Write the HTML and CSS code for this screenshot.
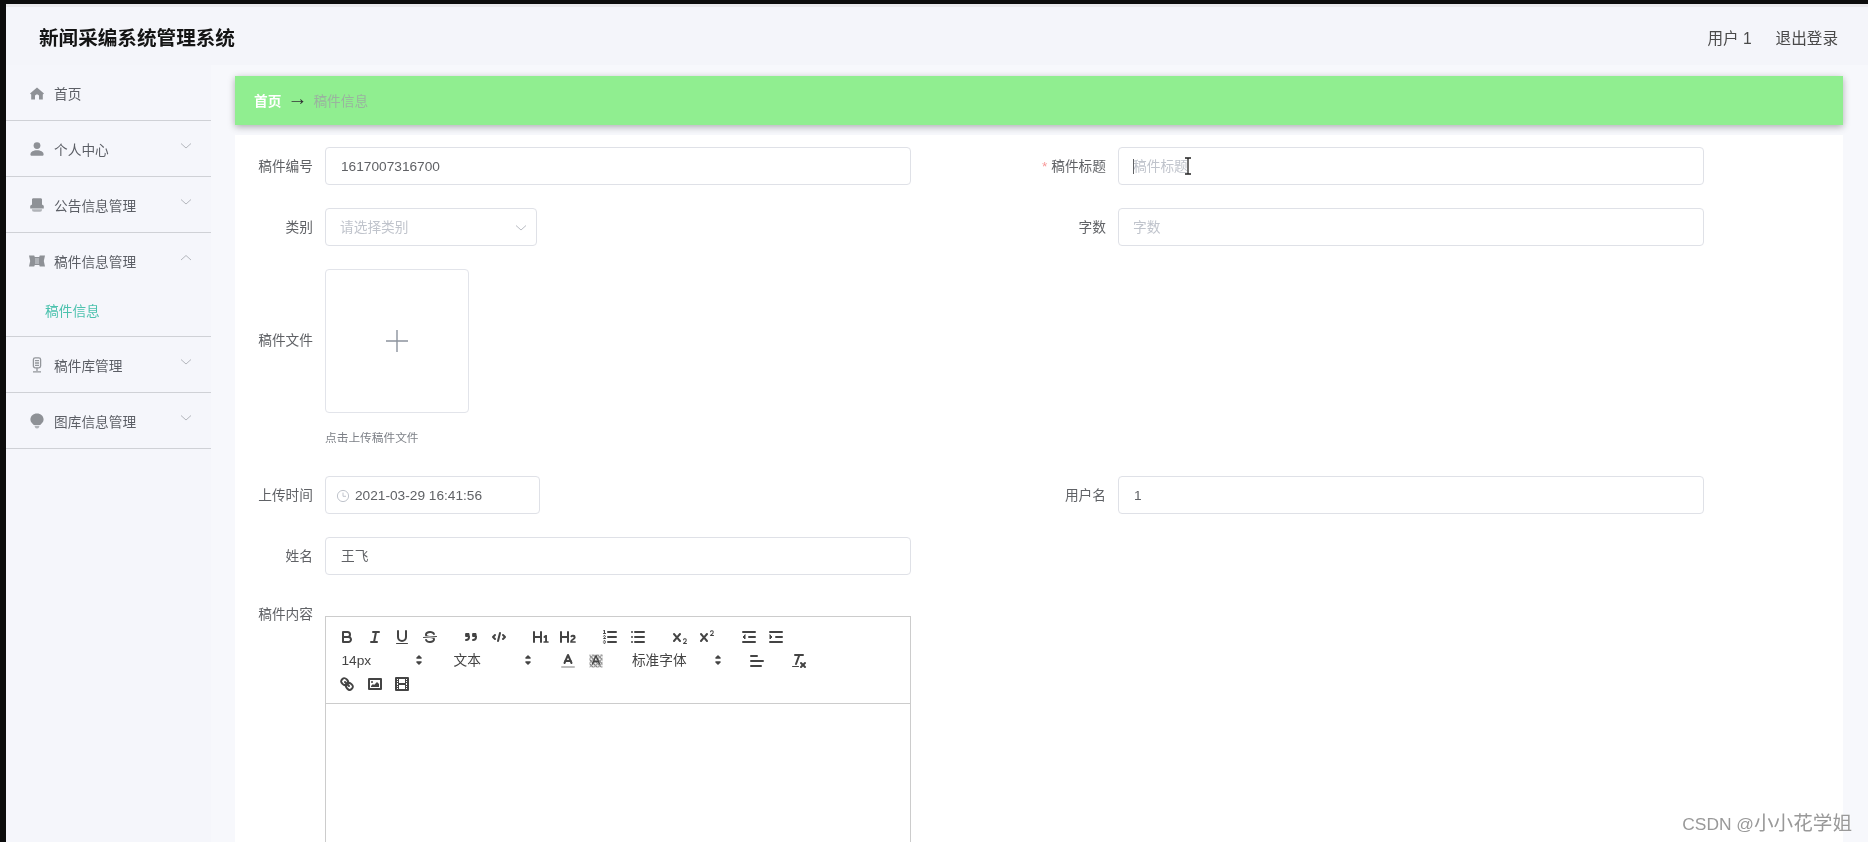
FILE: index.html
```html
<!DOCTYPE html>
<html lang="zh-CN">
<head>
<meta charset="utf-8">
<title>新闻采编系统管理系统</title>
<link rel="stylesheet" href="styles.css">
</head>
<body>
<svg class="defs" aria-hidden="true">
  <defs>
    <pattern id="hatch" width="3" height="3" patternUnits="userSpaceOnUse" patternTransform="rotate(45)"><rect width="3" height="1.2" fill="#777"/><rect width="1.2" height="3" fill="#999"/></pattern>
    <symbol id="chev-down" viewBox="0 0 12 12"><polyline points="1,3.5 6,8 11,3.5"/></symbol>
    <symbol id="chev-up" viewBox="0 0 12 12"><polyline points="1,8 6,3.5 11,8"/></symbol>
    <symbol id="updown" viewBox="0 0 18 18"><polygon class="qa" points="7 11 9 13 11 11 7 11"/><polygon class="qa" points="7 7 9 5 11 7 7 7"/></symbol>
  </defs>
</svg>
<div class="frame">
  <header class="topbar">
    <h1 class="brand">新闻采编系统管理系统</h1>
    <div class="user"><span>用户 1</span><span>退出登录</span></div>
  </header>
  <div class="body-row">
    <nav class="sidebar">
      <div class="nav-item">
        <div class="nav-row">
          <svg class="nav-icon" viewBox="0 0 16 16"><path d="M8 2.4 15 8.6 13.8 9.6V14.6H10V11C10 10.2 9 9.6 8 9.6S6 10.2 6 11V14.6H2.2V9.6L1 8.6Z"/></svg>
          <span>首页</span>
        </div>
      </div>
      <div class="nav-item">
        <div class="nav-row">
          <svg class="nav-icon" viewBox="0 0 16 16"><circle cx="8" cy="4.6" r="3.4"/><path d="M1.4 13.2C1.4 10.8 4.4 9.2 8 9.2S14.6 10.8 14.6 13.2C14.6 14.4 14 14.8 13 14.8H3C2 14.8 1.4 14.4 1.4 13.2Z"/></svg>
          <span>个人中心</span>
          <svg class="chev"><use href="#chev-down"/></svg>
        </div>
      </div>
      <div class="nav-item">
        <div class="nav-row">
          <svg class="nav-icon" viewBox="0 0 16 16"><path d="M3 2.6C3 1.8 3.6 1.2 4.4 1.2H11.6C12.4 1.2 13 1.8 13 2.6V7.6L14.8 8.8V11.4H1.2V8.8L3 7.6Z"/><path class="soft" d="M2.8 12.2H13.2L12.8 13.6C12.6 14.4 12 14.8 11.2 14.8H4.8C4 14.8 3.4 14.4 3.2 13.6Z"/></svg>
          <span>公告信息管理</span>
          <svg class="chev"><use href="#chev-down"/></svg>
        </div>
      </div>
      <div class="nav-item">
        <div class="nav-row">
          <svg class="nav-icon" viewBox="0 0 16 16"><path d="M0 2.6H5.2L5.8 4H10.2L10.8 2.6H16L14.8 8 16 13.4H10.8L10.2 12H5.8L5.2 13.4H0L1.2 8Z"/><path class="soft" d="M6 5H10V11H6Z"/></svg>
          <span>稿件信息管理</span>
          <svg class="chev"><use href="#chev-up"/></svg>
        </div>
        <div class="nav-sub">稿件信息</div>
      </div>
      <div class="nav-item">
        <div class="nav-row">
          <svg class="nav-icon" viewBox="0 0 16 16"><path class="mic" d="M4.4 2.6C4.4 1.5 5.2.8 6.2.8H9.8C10.8.8 11.6 1.5 11.6 2.6V9C11.6 10.1 10.8 10.8 9.8 10.8H6.2C5.2 10.8 4.4 10.1 4.4 9Z"/><path class="mic" d="M8 10.8V14M4 14.8H12M6 3.6H10M6 6H10M6 8.4H10"/></svg>
          <span>稿件库管理</span>
          <svg class="chev"><use href="#chev-down"/></svg>
        </div>
      </div>
      <div class="nav-item">
        <div class="nav-row">
          <svg class="nav-icon" viewBox="0 0 16 16"><path d="M8 .6C11.8.6 14.6 3.2 14.6 6.6 14.6 9.2 12.8 10.4 11.2 12H4.8C3.2 10.4 1.4 9.2 1.4 6.6 1.4 3.2 4.2.6 8 .6Z"/><path class="soft" d="M5.4 12.8H10.6L9.6 15C9.2 15.6 6.8 15.6 6.4 15Z"/></svg>
          <span>图库信息管理</span>
          <svg class="chev"><use href="#chev-down"/></svg>
        </div>
      </div>
    </nav>
    <main class="content">
      <div class="crumbs"><span class="crumb-home">首页</span><span class="crumb-sep">→</span><span class="crumb-cur">稿件信息</span></div>
      <form class="card">
        <div class="field">
          <label class="label">稿件编号</label>
          <div class="input wide">1617007316700</div>
        </div>
        <div class="field">
          <label class="label"><i class="req">*</i> 稿件标题</label>
          <div class="input wide ph focus">稿件标题<span class="caret"></span>
            <svg class="ibeam" viewBox="0 0 10 18"><path d="M2 1H8M5 1V17M2 17H8"/></svg>
          </div>
        </div>
        <div class="field">
          <label class="label">类别</label>
          <div class="input select ph">请选择类别<svg class="chev sel-chev"><use href="#chev-down"/></svg></div>
        </div>
        <div class="field">
          <label class="label">字数</label>
          <div class="input wide ph">字数</div>
        </div>
        <div class="field col1 upload-field">
          <label class="label upload-label">稿件文件</label>
          <div class="upload-col">
            <div class="upload"><svg class="plus" viewBox="0 0 22 22"><path d="M0 11H22M11 0V22"/></svg></div>
            <div class="hint">点击上传稿件文件</div>
          </div>
        </div>
        <div class="field col1">
          <label class="label">上传时间</label>
          <div class="input date"><svg class="clock" viewBox="0 0 14 14"><circle cx="7" cy="7" r="5.6"/><path d="M7 3.6V7.3H10"/></svg>2021-03-29 16:41:56</div>
        </div>
        <div class="field">
          <label class="label">用户名</label>
          <div class="input wide">1</div>
        </div>
        <div class="field col1">
          <label class="label">姓名</label>
          <div class="input wide">王飞</div>
        </div>
        <div class="field col1">
          <label class="label editor-label">稿件内容</label>
          <div class="editor">
            <div class="toolbar">
              <div class="tb-row">
                <div class="tb-group">
                  <button type="button" class="tb"><svg viewBox="0 0 18 18"><path class="qs" d="M5,4H9.5A2.5,2.5,0,0,1,12,6.5v0A2.5,2.5,0,0,1,9.5,9H5A0,0,0,0,1,5,9V4A0,0,0,0,1,5,4Z"/><path class="qs" d="M5,9h5.5A2.5,2.5,0,0,1,13,11.5v0A2.5,2.5,0,0,1,10.5,14H5a0,0,0,0,1,0,0V9A0,0,0,0,1,5,9Z"/></svg></button>
                  <button type="button" class="tb"><svg viewBox="0 0 18 18"><line class="qs" x1="7" x2="13" y1="4" y2="4"/><line class="qs" x1="5" x2="11" y1="14" y2="14"/><line class="qs" x1="8" x2="10" y1="14" y2="4"/></svg></button>
                  <button type="button" class="tb"><svg viewBox="0 0 18 18"><path class="qs" d="M5,3V9a4.012,4.012,0,0,0,4,4H9a4.012,4.012,0,0,0,4-4V3"/><rect class="qf" height="1" rx=".5" ry=".5" width="12" x="3" y="15"/></svg></button>
                  <button type="button" class="tb"><svg viewBox="0 0 18 18"><line class="qs qt" x1="15.5" x2="2.5" y1="8.5" y2="9.5"/><path class="qf" d="M9.007,8C6.542,7.791,6,7.519,6,6.5,6,5.792,7.283,5,9,5c1.571,0,2.765.679,2.969,1.309a1,1,0,0,0,1.9-.617C13.356,4.106,11.354,3,9,3,6.2,3,4,4.538,4,6.5a3.2,3.2,0,0,0,.5,1.843Z"/><path class="qf" d="M8.984,10C11.457,10.208,12,10.479,12,11.5c0,.708-1.283,1.5-3,1.5-1.571,0-2.765-.679-2.969-1.309a1,1,0,1,0-1.9.617C4.644,13.894,6.646,15,9,15c2.8,0,5-1.538,5-3.5a3.2,3.2,0,0,0-.5-1.843Z"/></svg></button>
                </div>
                <div class="tb-group">
                  <button type="button" class="tb"><svg viewBox="0 0 18 18"><rect class="qs qf" height="3" width="3" x="4" y="5.5"/><rect class="qs qf" height="3" width="3" x="11" y="5.5"/><path class="qs" d="M7,8.5V9A3,3,0,0,1,4,12"/><path class="qs" d="M14,8.5V9a3,3,0,0,1-3,3"/></svg></button>
                  <button type="button" class="tb"><svg viewBox="0 0 18 18"><polyline class="qs" points="5 7 3 9 5 11"/><polyline class="qs" points="13 7 15 9 13 11"/><line class="qs" x1="10" x2="8" y1="5" y2="13"/></svg></button>
                </div>
                <div class="tb-group">
                  <button type="button" class="tb"><svg viewBox="0 0 18 18"><path class="qf" d="M10,4V14a1,1,0,0,1-2,0V10H3v4a1,1,0,0,1-2,0V4A1,1,0,0,1,3,4V8H8V4a1,1,0,0,1,2,0Zm6.06787,9.209H14.98975V7.59277a.54085.54085,0,0,0-.605-.60547h-.62744a1.01119,1.01119,0,0,0-.748.29688L11.645,8.56641a.5435.5435,0,0,0-.022.8584l.28613.30762a.53861.53861,0,0,0,.84717.0332l.09912-.08789a1.2137,1.2137,0,0,0,.2417-.35254h.02246s-.01123.30859-.01123.60547V13.209H12.041a.54085.54085,0,0,0-.605.60547v.43945a.54085.54085,0,0,0,.605.60547h4.02686a.54085.54085,0,0,0,.605-.60547v-.43945A.54085.54085,0,0,0,16.06787,13.209Z"/></svg></button>
                  <button type="button" class="tb"><svg viewBox="0 0 18 18"><path class="qf" d="M16.73975,13.81445v.43945a.54085.54085,0,0,1-.605.60547H11.855a.58392.58392,0,0,1-.64893-.60547V14.0127c0-2.90527,3.39941-3.42187,3.39941-4.55469a.77675.77675,0,0,0-.84717-.78125,1.17684,1.17684,0,0,0-.83594.38477c-.2749.26367-.561.374-.85791.13184l-.4292-.34082c-.30811-.24219-.38525-.51758-.1543-.81445a2.97155,2.97155,0,0,1,2.45361-1.17676,2.45393,2.45393,0,0,1,2.68408,2.40918c0,2.45312-3.1792,2.92676-3.27832,3.93848h2.79443A.54085.54085,0,0,1,16.73975,13.81445ZM9,3A.99974.99974,0,0,0,8,4V8H3V4A1,1,0,0,0,1,4V14a1,1,0,0,0,2,0V10H8v4a1,1,0,0,0,2,0V4A.99974.99974,0,0,0,9,3Z"/></svg></button>
                </div>
                <div class="tb-group">
                  <button type="button" class="tb"><svg viewBox="0 0 18 18"><line class="qs" x1="7" x2="15" y1="4" y2="4"/><line class="qs" x1="7" x2="15" y1="9" y2="9"/><line class="qs" x1="7" x2="15" y1="14" y2="14"/><line class="qs qt" x1="2.5" x2="4.5" y1="5.5" y2="5.5"/><path class="qf" d="M3.5,6A0.5,0.5,0,0,1,3,5.5V3.085l-0.276.138A0.5,0.5,0,0,1,2.053,3c-0.124-.247-0.023-0.324.224-0.447l1-.5A0.5,0.5,0,0,1,4,2.5v3A0.5,0.5,0,0,1,3.5,6Z"/><path class="qs qt" d="M4.5,10.5h-2c0-.234,1.85-1.076,1.85-2.234A0.959,0.959,0,0,0,2.5,8.156"/><path class="qs qt" d="M2.5,14.846a0.959,0.959,0,0,0,1.85-.109A0.7,0.7,0,0,0,3.75,14a0.688,0.688,0,0,0,.6-0.736,0.959,0.959,0,0,0-1.85-.109"/></svg></button>
                  <button type="button" class="tb"><svg viewBox="0 0 18 18"><line class="qs" x1="6" x2="15" y1="4" y2="4"/><line class="qs" x1="6" x2="15" y1="9" y2="9"/><line class="qs" x1="6" x2="15" y1="14" y2="14"/><line class="qs" x1="3" x2="3" y1="4" y2="4"/><line class="qs" x1="3" x2="3" y1="9" y2="9"/><line class="qs" x1="3" x2="3" y1="14" y2="14"/></svg></button>
                </div>
                <div class="tb-group">
                  <button type="button" class="tb"><svg viewBox="0 0 18 18"><path class="qf" d="M15.5,15H13.861a3.858,3.858,0,0,0,1.914-2.975,1.8,1.8,0,0,0-1.6-1.751A1.921,1.921,0,0,0,12.021,11.7a0.50013,0.50013,0,1,0,.957.291h0a0.914,0.914,0,0,1,1.053-.725,0.81,0.81,0,0,1,.744.762c0,1.076-1.16971,1.86982-1.93971,2.43082A1.45639,1.45639,0,0,0,12,15.5a0.5,0.5,0,0,0,.5.5h3A0.5,0.5,0,0,0,15.5,15Z"/><path class="qf" d="M9.65,5.241a1,1,0,0,0-1.409.108L6,7.964,3.759,5.349A1,1,0,0,0,2.192,6.59178Q2.21541,6.6213,2.241,6.649L4.684,9.5,2.241,12.35A1,1,0,0,0,3.71,13.70722q0.02557-.02768.049-0.05722L6,11.036,8.241,13.65a1,1,0,1,0,1.567-1.24277Q9.78459,12.3777,9.759,12.35L7.316,9.5,9.759,6.651A1,1,0,0,0,9.65,5.241Z"/></svg></button>
                  <button type="button" class="tb"><svg viewBox="0 0 18 18"><path class="qf" d="M15.5,7H13.861a4.015,4.015,0,0,0,1.914-2.975,1.8,1.8,0,0,0-1.6-1.751A1.922,1.922,0,0,0,12.021,3.7a0.5,0.5,0,1,0,.957.291,0.917,0.917,0,0,1,1.053-.725,0.81,0.81,0,0,1,.744.762c0,1.077-1.164,1.925-1.934,2.486A1.423,1.423,0,0,0,12,7.5a0.5,0.5,0,0,0,.5.5h3A0.5,0.5,0,0,0,15.5,7Z"/><path class="qf" d="M9.65,5.241a1,1,0,0,0-1.409.108L6,7.964,3.759,5.349A1,1,0,0,0,2.192,6.59178Q2.21541,6.6213,2.241,6.649L4.684,9.5,2.241,12.35A1,1,0,0,0,3.71,13.70722q0.02557-.02768.049-0.05722L6,11.036,8.241,13.65a1,1,0,1,0,1.567-1.24277Q9.78459,12.3777,9.759,12.35L7.316,9.5,9.759,6.651A1,1,0,0,0,9.65,5.241Z"/></svg></button>
                </div>
                <div class="tb-group">
                  <button type="button" class="tb"><svg viewBox="0 0 18 18"><line class="qs" x1="3" x2="15" y1="14" y2="14"/><line class="qs" x1="3" x2="15" y1="4" y2="4"/><line class="qs" x1="9" x2="15" y1="9" y2="9"/><polyline class="qs qf" points="5 7 5 11 3 9 5 7"/></svg></button>
                  <button type="button" class="tb"><svg viewBox="0 0 18 18"><line class="qs" x1="3" x2="15" y1="14" y2="14"/><line class="qs" x1="3" x2="15" y1="4" y2="4"/><line class="qs" x1="9" x2="15" y1="9" y2="9"/><polyline class="qs qf" points="3 7 3 11 5 9 3 7"/></svg></button>
                </div>
              </div>
              <div class="tb-row">
                <div class="picker size">14px<svg class="updown"><use href="#updown"/></svg></div>
                <div class="picker head">文本<svg class="updown"><use href="#updown"/></svg></div>
                <div class="tb-group">
                  <button type="button" class="tb"><svg viewBox="0 0 18 18"><line class="qs under" x1="3" x2="15" y1="15" y2="15"/><polyline class="qs" points="5.5 11 9 3 12.5 11"/><line class="qs" x1="11.63" x2="6.38" y1="9" y2="9"/></svg></button>
                  <button type="button" class="tb"><svg viewBox="0 0 18 18"><rect class="hatch" x="2.5" y="2.5" width="13" height="13"/><polyline class="qs thin" points="5.5 12 9 3.5 12.5 12"/><line class="qs thin" x1="11.5" x2="6.5" y1="9.5" y2="9.5"/></svg></button>
                </div>
                <div class="picker font">标准字体<svg class="updown"><use href="#updown"/></svg></div>
                <div class="tb-group">
                  <button type="button" class="tb"><svg viewBox="0 0 18 18"><line class="qs" x1="3" x2="15" y1="9" y2="9"/><line class="qs" x1="3" x2="13" y1="14" y2="14"/><line class="qs" x1="3" x2="9" y1="4" y2="4"/></svg></button>
                </div>
                <div class="tb-group">
                  <button type="button" class="tb"><svg viewBox="0 0 18 18"><line class="qs" x1="5" x2="13" y1="3" y2="3"/><line class="qs" x1="6" x2="9.35" y1="12" y2="3"/><line class="qs" x1="11" x2="15" y1="11" y2="15"/><line class="qs" x1="15" x2="11" y1="11" y2="15"/><rect class="qf" height="1" rx=".5" ry=".5" width="7" x="2" y="14"/></svg></button>
                </div>
              </div>
              <div class="tb-row">
                <div class="tb-group">
                  <button type="button" class="tb"><svg viewBox="0 0 18 18"><line class="qs" x1="7" x2="11" y1="7" y2="11"/><path class="qs" d="M8.9,4.577a3.476,3.476,0,0,1,.36,4.679A3.476,3.476,0,0,1,4.577,8.9C3.185,7.5,2.035,6.4,4.217,4.217S7.5,3.185,8.9,4.577Z"/><path class="qs" d="M13.423,9.1a3.476,3.476,0,0,0-4.679-.36,3.476,3.476,0,0,0,.36,4.679c1.392,1.392,2.5,2.542,4.679.36S14.815,10.5,13.423,9.1Z"/></svg></button>
                  <button type="button" class="tb"><svg viewBox="0 0 18 18"><rect class="qs" height="10" width="12" x="3" y="4"/><circle class="qf" cx="6" cy="7" r="1"/><polyline class="qf" points="5 12 5 11 7 9 8 10 11 7 13 9 13 12 5 12"/></svg></button>
                  <button type="button" class="tb"><svg viewBox="0 0 18 18"><rect class="qs" height="12" width="12" x="3" y="3"/><rect class="qf" height="12" width="1" x="5" y="3"/><rect class="qf" height="12" width="1" x="12" y="3"/><rect class="qf" height="2" width="8" x="5" y="8"/><rect class="qf" height="1" width="3" x="3" y="5"/><rect class="qf" height="1" width="3" x="3" y="7"/><rect class="qf" height="1" width="3" x="3" y="10"/><rect class="qf" height="1" width="3" x="3" y="12"/><rect class="qf" height="1" width="3" x="12" y="5"/><rect class="qf" height="1" width="3" x="12" y="7"/><rect class="qf" height="1" width="3" x="12" y="10"/><rect class="qf" height="1" width="3" x="12" y="12"/></svg></button>
                </div>
              </div>
            </div>
            <div class="editor-body"></div>
          </div>
        </div>
      </form>
    </main>
  </div>
  <div class="watermark"><span class="wm-latin">CSDN @</span><span class="wm-cjk">小小花学姐</span></div>
</div>
</body>
</html>
```

FILE: styles.css
```css
* { box-sizing: border-box; }
html, body { margin: 0; height: 842px; overflow: hidden; background: #0c0c0c; }
body { font-family: "Liberation Sans", "Noto Sans CJK SC", sans-serif; font-size: 13.7px; color: #606266; }
.defs { position: absolute; width: 0; height: 0; }

.frame {
  position: relative;
  height: 838px;
  margin: 4px 0 0 6px;
  border-top: 3px solid #e9e9ec;
  background: #f5f6fb;
  overflow: hidden;
  filter: blur(0.45px);
}

.topbar { height: 58px; display: flex; align-items: center; justify-content: space-between; padding: 1px 30px 0 33px; background: #f4f5fa; }
.brand { margin: 0; font-size: 19.6px; font-weight: 700; color: #141414; }
.user { display: flex; gap: 24px; font-size: 15.6px; color: #4a4a4a; }

.body-row { display: flex; }
.sidebar { width: 205px; flex: none; background: #f5f6fb; }
.nav-item { border-bottom: 1px solid #cfd1d6; }
.nav-row { height: 55px; display: flex; align-items: center; padding: 0 19px 0 23px; color: #5c5f66; }
.nav-row > span { flex: 1; }
.nav-icon { width: 16px; height: 16px; margin-right: 9px; fill: #8e9196; flex: none; }
.nav-icon .soft { fill: #b0b3b8; }
.nav-icon .mic { fill: none; stroke: #93969b; stroke-width: 1.3; }
.chev { width: 12px; height: 12px; fill: none; stroke: #b4b7bd; stroke-width: 1; margin-bottom: 5px; flex: none; }
.nav-sub { height: 48px; padding: 0 0 0 39px; line-height: 48px; color: #4cc2ae; }

.content { flex: 1; min-width: 0; padding: 11px 25px 0 24px; background: #f7f8fc; }
.crumbs { height: 49px; display: flex; align-items: center; padding: 0 0 2px 19px; background: #90ee90; box-shadow: 0 2px 7px rgba(0,0,0,.3); }
.crumb-home { color: #fff; font-weight: 700; }
.crumb-sep { margin: 0 10px 3px 6px; width: 16px; font-size: 20px; font-weight: 700; line-height: 20px; color: #303133; text-align: center; }
.crumb-cur { color: #9ab39f; }

.card { display: grid; grid-template-columns: 793px 1fr; row-gap: 23px; align-items: start; margin-top: 10px; padding-top: 12px; background: #fff; min-height: 900px; }
.field { display: flex; align-items: flex-start; }
.col1 { grid-column: 1; }
.label { width: 78px; height: 38px; margin-right: 12px; flex: none; line-height: 39px; text-align: right; color: #606266; }
.req { font-style: normal; color: #f56c6c; opacity: .7; }

.input { position: relative; height: 38px; padding: 0 15px; line-height: 37.5px; border: 1px solid #dfe1e7; border-radius: 4px; background: #fff; color: #606266; }
.wide { width: 586px; }
.ph { padding-left: 14px; color: #c0c4cc; }
.select { width: 212px; }
.sel-chev { position: absolute; right: 9px; top: 13px; margin: 0; stroke: #b9bcc3; }
.date { width: 215px; padding-left: 29px; }
.clock { position: absolute; left: 10px; top: 12px; width: 14px; height: 14px; fill: none; stroke: #c0c4cc; stroke-width: 1; }
.caret { position: absolute; left: 14px; top: 11px; width: 1px; height: 15px; background: #606266; }
.ibeam { position: absolute; left: 64px; top: 9px; width: 10px; height: 18px; fill: none; stroke: #222; stroke-width: 1.3; }

.upload-label { height: 144px; line-height: 144px; }
.upload-col { display: flex; flex-direction: column; }
.upload { width: 144px; height: 144px; display: flex; align-items: center; justify-content: center; border: 1px solid #e2e4ea; border-radius: 4px; background: #fff; }
.plus { width: 22px; height: 22px; fill: none; stroke: #8c939d; stroke-width: 1.4; }
.hint { height: 40px; padding-top: 17px; font-size: 11.7px; line-height: 16px; color: #7d8087; }

.editor-label { height: 34px; line-height: 34px; }
.editor { width: 586px; height: 500px; margin-top: 18px; border: 1px solid #ccc; }
.toolbar { height: 87px; padding: 8px 7px 0; border-bottom: 1px solid #ccc; }
.tb-row { display: flex; height: 23.5px; align-items: flex-start; }
.tb-group { display: flex; margin-right: 14.4px; }
.tb { width: 27.5px; height: 23px; display: block; padding: 3px 5px; border: 0; background: none; }
.tb svg { display: block; width: 18px; height: 18px; }
.qs { fill: none; stroke: #444; stroke-width: 2; stroke-linecap: round; stroke-linejoin: round; }
.qt { stroke-width: 1; }
.qf { fill: #444; stroke-width: 1; }
.qs.qf { stroke: #444; fill: #444; stroke-width: 1; }
.qa { fill: #444; stroke: #444; stroke-width: 1.6; stroke-linejoin: round; }
.thin { stroke-width: 1.3; }
.under { stroke: #bdbdbd; }
.hatch { fill: url(#hatch); }

.picker { position: relative; height: 23px; padding-left: 8.5px; margin-right: 15px; line-height: 23px; color: #444; }
.size { width: 97px; }
.head { width: 94px; }
.font { width: 106px; margin-right: 14px; }
.updown { position: absolute; right: 2px; top: 2px; width: 18px; height: 18px; }

.watermark { position: absolute; right: 16px; bottom: 6px; color: #999; text-shadow: 0 0 2px #fff; white-space: nowrap; }
.wm-latin { font-size: 17.4px; }
.wm-cjk { font-size: 19.6px; }
```
